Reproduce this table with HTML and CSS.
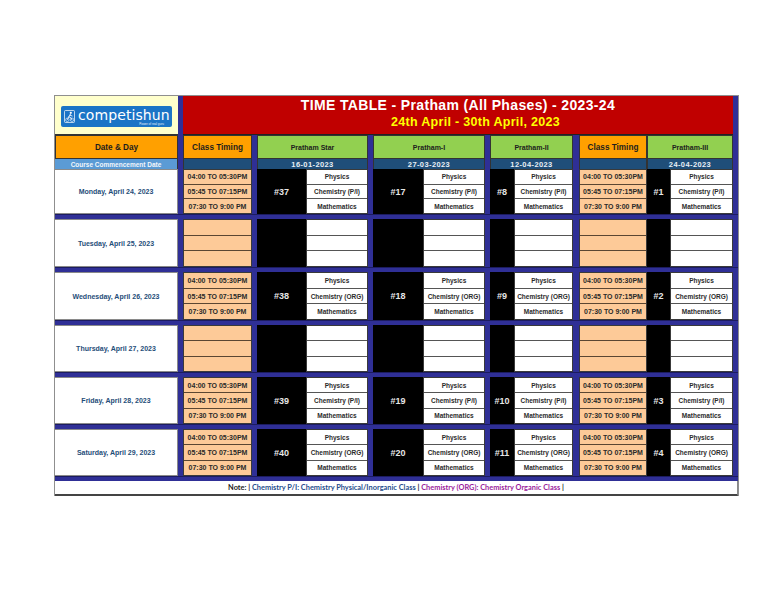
FILE: index.html
```html
<!DOCTYPE html>
<html>
<head>
<meta charset="utf-8">
<link rel="stylesheet" href="styles.css">
</head>
<body>
<div class="sheet">
  <div class="logo-cell c1">
    <div class="logo">
      <svg class="logo-icon" viewBox="0 0 12 14" width="11" height="13">
        <rect x="0.5" y="0.5" width="11" height="13" rx="1" fill="none" stroke="#fff" stroke-width="0.8"/>
        <circle cx="7.4" cy="3" r="1.2" fill="#fff"/>
        <path d="M7 4.6 L5.2 7.4 L7.8 8.6 L8.6 10.6 M5.2 7.4 L3.6 10.4 M6.4 5.6 L8.8 6.4" fill="none" stroke="#fff" stroke-width="0.9" stroke-linecap="round"/>
        <circle cx="3.6" cy="10.6" r="1.9" fill="none" stroke="#fff" stroke-width="0.6"/>
        <circle cx="8.8" cy="10.6" r="1.9" fill="none" stroke="#fff" stroke-width="0.6"/>
      </svg>
      <div class="brand">
        <span class="word">competishun</span>
        <span class="tag">Power of real guru</span>
      </div>
    </div>
  </div>
  <div class="title">
    <div class="t1">TIME TABLE - Pratham (All Phases) - 2023-24</div>
    <div class="t2">24th April - 30th April, 2023</div>
  </div>

  <div class="hd orange c1">Date &amp; Day</div>
  <div class="hd orange c3">Class Timing</div>
  <div class="hd green g1">Pratham Star</div>
  <div class="hd green g2">Pratham-I</div>
  <div class="hd green g3">Pratham-II</div>
  <div class="hd orange c14">Class Timing</div>
  <div class="hd green g4">Pratham-III</div>

  <div class="cm-l c1">Course Commencement Date</div>
  <div class="cm c3"></div>
  <div class="cm g1">16-01-2023</div>
  <div class="cm g2">27-03-2023</div>
  <div class="cm g3">12-04-2023</div>
  <div class="cm c14"></div>
  <div class="cm g4">24-04-2023</div>

  <!-- Monday -->
  <div class="date c1">Monday, April 24, 2023</div>
  <div class="time c3"><span>04:00 TO 05:30PM</span><span>05:45 TO 07:15PM</span><span>07:30 TO 9:00 PM</span></div>
  <div class="blk c5">#37</div>
  <div class="subj c6"><span>Physics</span><span>Chemistry (P/I)</span><span>Mathematics</span></div>
  <div class="blk c8">#17</div>
  <div class="subj c9"><span>Physics</span><span>Chemistry (P/I)</span><span>Mathematics</span></div>
  <div class="blk c11">#8</div>
  <div class="subj c12"><span>Physics</span><span>Chemistry (P/I)</span><span>Mathematics</span></div>
  <div class="time c14"><span>04:00 TO 05:30PM</span><span>05:45 TO 07:15PM</span><span>07:30 TO 9:00 PM</span></div>
  <div class="blk c15">#1</div>
  <div class="subj c16"><span>Physics</span><span>Chemistry (P/I)</span><span>Mathematics</span></div>
  <div class="sep"></div>

  <!-- Tuesday -->
  <div class="date c1">Tuesday, April 25, 2023</div>
  <div class="time c3"><span></span><span></span><span></span></div>
  <div class="blk c5"></div>
  <div class="subj c6"><span></span><span></span><span></span></div>
  <div class="blk c8"></div>
  <div class="subj c9"><span></span><span></span><span></span></div>
  <div class="blk c11"></div>
  <div class="subj c12"><span></span><span></span><span></span></div>
  <div class="time c14"><span></span><span></span><span></span></div>
  <div class="blk c15"></div>
  <div class="subj c16"><span></span><span></span><span></span></div>
  <div class="sep"></div>

  <!-- Wednesday -->
  <div class="date c1">Wednesday, April 26, 2023</div>
  <div class="time c3"><span>04:00 TO 05:30PM</span><span>05:45 TO 07:15PM</span><span>07:30 TO 9:00 PM</span></div>
  <div class="blk c5">#38</div>
  <div class="subj c6"><span>Physics</span><span>Chemistry (ORG)</span><span>Mathematics</span></div>
  <div class="blk c8">#18</div>
  <div class="subj c9"><span>Physics</span><span>Chemistry (ORG)</span><span>Mathematics</span></div>
  <div class="blk c11">#9</div>
  <div class="subj c12"><span>Physics</span><span>Chemistry (ORG)</span><span>Mathematics</span></div>
  <div class="time c14"><span>04:00 TO 05:30PM</span><span>05:45 TO 07:15PM</span><span>07:30 TO 9:00 PM</span></div>
  <div class="blk c15">#2</div>
  <div class="subj c16"><span>Physics</span><span>Chemistry (ORG)</span><span>Mathematics</span></div>
  <div class="sep"></div>

  <!-- Thursday -->
  <div class="date c1">Thursday, April 27, 2023</div>
  <div class="time c3"><span></span><span></span><span></span></div>
  <div class="blk c5"></div>
  <div class="subj c6"><span></span><span></span><span></span></div>
  <div class="blk c8"></div>
  <div class="subj c9"><span></span><span></span><span></span></div>
  <div class="blk c11"></div>
  <div class="subj c12"><span></span><span></span><span></span></div>
  <div class="time c14"><span></span><span></span><span></span></div>
  <div class="blk c15"></div>
  <div class="subj c16"><span></span><span></span><span></span></div>
  <div class="sep"></div>

  <!-- Friday -->
  <div class="date c1">Friday, April 28, 2023</div>
  <div class="time c3"><span>04:00 TO 05:30PM</span><span>05:45 TO 07:15PM</span><span>07:30 TO 9:00 PM</span></div>
  <div class="blk c5">#39</div>
  <div class="subj c6"><span>Physics</span><span>Chemistry (P/I)</span><span>Mathematics</span></div>
  <div class="blk c8">#19</div>
  <div class="subj c9"><span>Physics</span><span>Chemistry (P/I)</span><span>Mathematics</span></div>
  <div class="blk c11">#10</div>
  <div class="subj c12"><span>Physics</span><span>Chemistry (P/I)</span><span>Mathematics</span></div>
  <div class="time c14"><span>04:00 TO 05:30PM</span><span>05:45 TO 07:15PM</span><span>07:30 TO 9:00 PM</span></div>
  <div class="blk c15">#3</div>
  <div class="subj c16"><span>Physics</span><span>Chemistry (P/I)</span><span>Mathematics</span></div>
  <div class="sep"></div>

  <!-- Saturday -->
  <div class="date c1">Saturday, April 29, 2023</div>
  <div class="time c3"><span>04:00 TO 05:30PM</span><span>05:45 TO 07:15PM</span><span>07:30 TO 9:00 PM</span></div>
  <div class="blk c5">#40</div>
  <div class="subj c6"><span>Physics</span><span>Chemistry (ORG)</span><span>Mathematics</span></div>
  <div class="blk c8">#20</div>
  <div class="subj c9"><span>Physics</span><span>Chemistry (ORG)</span><span>Mathematics</span></div>
  <div class="blk c11">#11</div>
  <div class="subj c12"><span>Physics</span><span>Chemistry (ORG)</span><span>Mathematics</span></div>
  <div class="time c14"><span>04:00 TO 05:30PM</span><span>05:45 TO 07:15PM</span><span>07:30 TO 9:00 PM</span></div>
  <div class="blk c15">#4</div>
  <div class="subj c16"><span>Physics</span><span>Chemistry (ORG)</span><span>Mathematics</span></div>
  <div class="sep"></div>

  <div class="note"><span class="k">Note: |</span>&nbsp;<span class="nb">Chemistry P/I: Chemistry Physical/Inorganic Class</span>&nbsp;<span class="k">|</span>&nbsp;<span class="np">Chemistry (ORG): Chemistry Organic Class</span>&nbsp;<span class="k">|</span></div>
</div>
</body>
</html>
```
FILE: styles.css
```css
* { box-sizing: border-box; }
body {
  margin: 0;
  background: #ffffff;
  font-family: "Liberation Sans", Arial, sans-serif;
}
.sheet {
  display: grid;
  width: 683px;
  margin: 96px 0 0 55px;
  grid-template-columns: 123px 5px 69px 5px 49px 62px 5px 50px 62px 5px 24px 59px 6px 68px 23px 63px 5px;
  grid-template-rows: 39px 24px 10px 45px 5px 48px 5px 48px 5px 47px 5px 47px 5px 47px 5px 15px;
  background: #2f2f96;
  outline: 1px solid #8f8f8f;
}
.c1 { grid-column: 1; }
.c3 { grid-column: 3; }
.c5 { grid-column: 5; }
.c6 { grid-column: 6; }
.c8 { grid-column: 8; }
.c9 { grid-column: 9; }
.c11 { grid-column: 11; }
.c12 { grid-column: 12; }
.c14 { grid-column: 14; }
.c15 { grid-column: 15; }
.c16 { grid-column: 16; }
.g1 { grid-column: 5 / span 2; }
.g2 { grid-column: 8 / span 2; }
.g3 { grid-column: 11 / span 2; }
.g4 { grid-column: 15 / span 2; }

/* logo */
.logo-cell {
  background: #ffffcc;
  display: flex;
  align-items: center;
  justify-content: center;
  border-bottom: 1px solid #333;
  padding-top: 3px;
}
.logo {
  width: 111px;
  height: 21px;
  background: #1b74c6;
  border-radius: 2px;
  display: flex;
  align-items: center;
  gap: 3px;
  padding-left: 3px;
}
.logo-icon { flex: none; }
.brand {
  display: flex;
  flex-direction: column;
  align-items: flex-end;
  color: #fff;
}
.word {
  font-family: "DejaVu Sans", sans-serif;
  font-size: 14px;
  line-height: 15px;
  letter-spacing: 0.1px;
}
.tag {
  font-size: 3px;
  line-height: 3px;
  color: #e9f1fb;
  margin-right: 6px;
}

/* title */
.title {
  grid-column: 3 / 17;
  background: #c00000;
  display: flex;
  flex-direction: column;
  align-items: center;
  border-bottom: 1px solid #222;
  font-weight: bold;
}
.t1 {
  color: #ffffff;
  font-size: 14px;
  line-height: 16px;
  letter-spacing: 0.35px;
  margin-top: 1px;
}
.t2 {
  color: #ffff00;
  font-size: 12.5px;
  line-height: 15px;
  letter-spacing: 0.3px;
  margin-top: 2px;
  padding-left: 35px;
}

/* headers */
.hd {
  display: flex;
  align-items: center;
  justify-content: center;
  font-weight: bold;
  color: #1e1e1e;
  border: 1px solid #333;
}
.orange { background: #ffa000; font-size: 8.2px; }
.green { background: #92d050; font-size: 7px; }

.cm-l {
  background: #5b9bd5;
  color: #f2f6fb;
  font-size: 6.5px;
  font-weight: bold;
  display: flex;
  align-items: center;
  justify-content: center;
  border-right: 1px solid #333;
}
.cm {
  background: #1f4e79;
  color: #e8eef4;
  font-size: 7.5px;
  font-weight: bold;
  letter-spacing: 0.4px;
  display: flex;
  align-items: center;
  justify-content: center;
  border-left: 1px solid #333;
  border-right: 1px solid #333;
}

/* day rows */
.date {
  background: #ffffff;
  color: #1f4e79;
  font-size: 7px;
  font-weight: bold;
  display: flex;
  align-items: center;
  justify-content: center;
  border: 1px solid #8a8a8a;
  border-left: 0;
}
.time {
  display: flex;
  flex-direction: column;
  background: #fdca98;
  border: 1px solid #3a3a3a;
}
.time span {
  flex: 1;
  display: flex;
  align-items: center;
  justify-content: center;
  font-size: 7px;
  font-weight: bold;
  color: #2a2a2a;
  border-top: 1px solid #5b4632;
}
.time span:first-child { border-top: 0; }
.blk {
  background: #000000;
  color: #e6e6e6;
  font-size: 9px;
  font-weight: bold;
  display: flex;
  align-items: center;
  justify-content: center;
}
.subj {
  display: flex;
  flex-direction: column;
  background: #ffffff;
  border: 1px solid #3a3a3a;
}
.subj span {
  flex: 1;
  display: flex;
  align-items: center;
  justify-content: center;
  font-size: 6.5px;
  font-weight: bold;
  color: #2b2b2b;
  border-top: 1px solid #555;
}
.subj span:first-child { border-top: 0; }
.sep {
  grid-column: 1 / -1;
  border-top: 1px solid #1c1c60;
}

/* note */
.note {
  grid-column: 1 / -1;
  background: #ffffff;
  display: flex;
  align-items: center;
  justify-content: center;
  font-family: "Lato", "Liberation Sans", sans-serif;
  font-size: 7.4px;
  font-weight: bold;
  white-space: pre;
  border-bottom: 2px solid #444;
  border-right: 1px solid #888;
}
.k { color: #222; }
.nb { color: #1f4e8c; }
.np { color: #9b1c9b; }
```
